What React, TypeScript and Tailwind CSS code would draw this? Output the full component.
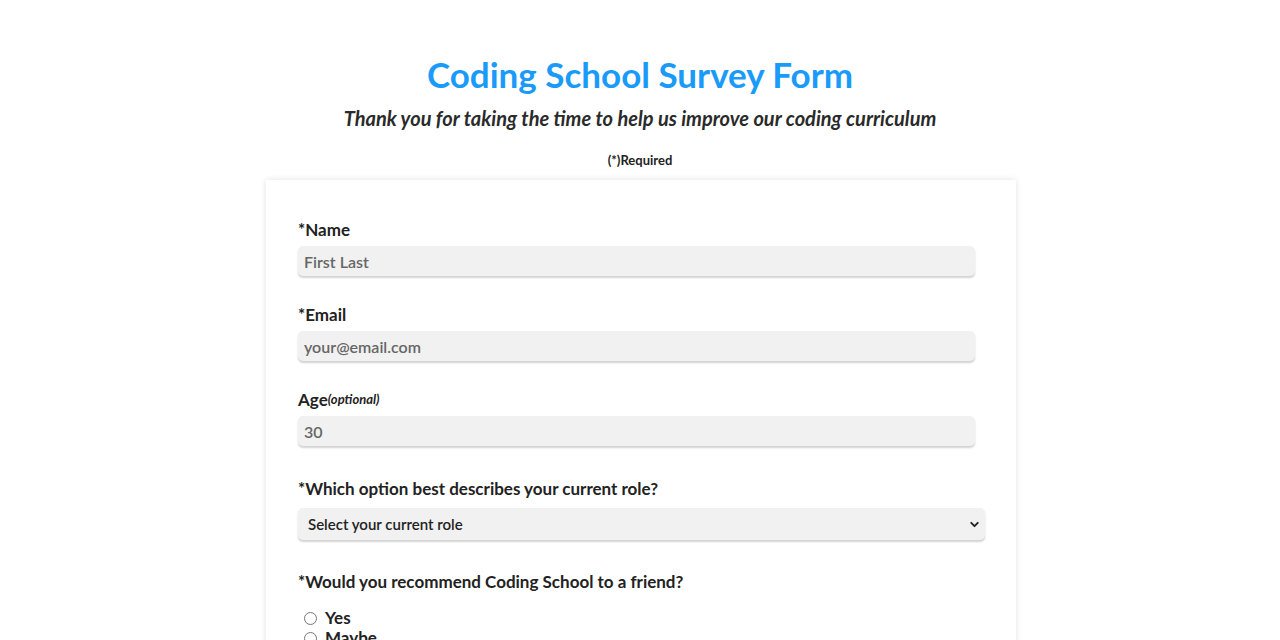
import { ChevronDown } from 'lucide-react';

const FIELDS = [
  { id: 'name', label: '*Name', placeholder: 'First Last', type: 'text' },
  { id: 'email', label: '*Email', placeholder: 'your@email.com', type: 'email' },
];

const inputCls =
  'block w-[677px] h-[30px] rounded-[5px] bg-[#f1f1f1] px-[6px] text-[16px] font-semibold text-[#333] placeholder:text-[#666] shadow-[0_2px_2px_rgba(0,0,0,0.18)] outline-none';

export default function App() {
  return (
    <div className="min-h-screen bg-white font-['Lato',sans-serif] text-[#222]">
      <header className="pt-[52px] text-center">
        <h1 className="text-[35px] leading-[44px] font-bold text-[#1a9bf9]">Coding School Survey Form</h1>
        <p className="mt-[9px] text-[20px] leading-[26px] font-bold italic text-[#2a2a2a]">
          Thank you for taking the time to help us improve our coding curriculum
        </p>
        <p className="mt-[21px] text-[13px] leading-[16px] font-bold text-[#222]">(*)Required</p>
      </header>

      <form className="mx-auto mt-[12px] w-[750px] translate-x-[1px] bg-white px-[32px] pt-[40px] pb-[40px] shadow-[0_0_6px_rgba(0,0,0,0.12)]">
        {FIELDS.map((f) => (
          <div key={f.id} className="mb-[29px]">
            <label htmlFor={f.id} className="block text-[17px] leading-[20px] font-bold">
              {f.label}
            </label>
            <input id={f.id} type={f.type} placeholder={f.placeholder} className={`mt-[6px] ${inputCls}`} />
          </div>
        ))}

        <div className="mb-[33px]">
          <label htmlFor="age" className="block h-[20px] text-[17px] leading-[20px] font-bold">
            Age<span className="relative -top-[2px] text-[13px] leading-[16px] italic">(optional)</span>
          </label>
          <input id="age" type="number" placeholder="30" className={`mt-[6px] ${inputCls}`} />
        </div>

        <div className="mb-[32px]">
          <label htmlFor="role" className="block text-[17px] leading-[20px] font-bold">
            *Which option best describes your current role?
          </label>
          <div className="relative mt-[9px] w-[687px]">
            <select
              id="role"
              defaultValue=""
              className="block h-[32px] w-full appearance-none rounded-[5px] bg-[#f1f1f1] pl-[10px] text-[15px] font-semibold text-[#222] shadow-[0_2px_2px_rgba(0,0,0,0.18)] outline-none"
            >
              <option value="" disabled>
                Select your current role
              </option>
              <option>Student</option>
              <option>Full Time Job</option>
              <option>Full Time Learner</option>
              <option>Prefer not to say</option>
              <option>Other</option>
            </select>
            <ChevronDown
              size={13}
              strokeWidth={3.5}
              className="pointer-events-none absolute right-[4px] top-[10px] text-[#222]"
            />
          </div>
        </div>

        <div>
          <p className="text-[17px] leading-[20px] font-bold">*Would you recommend Coding School to a friend?</p>
          <div className="mt-[16px] flex flex-col">
            {['Yes', 'Maybe', 'No'].map((opt) => (
              <label key={opt} className="flex h-[20px] items-center gap-[8px] pl-[6px] text-[17px] font-bold">
                <input type="radio" name="recommend" value={opt} className="m-0 h-[13px] w-[13px]" />
                {opt}
              </label>
            ))}
          </div>
        </div>
      </form>
    </div>
  );
}
